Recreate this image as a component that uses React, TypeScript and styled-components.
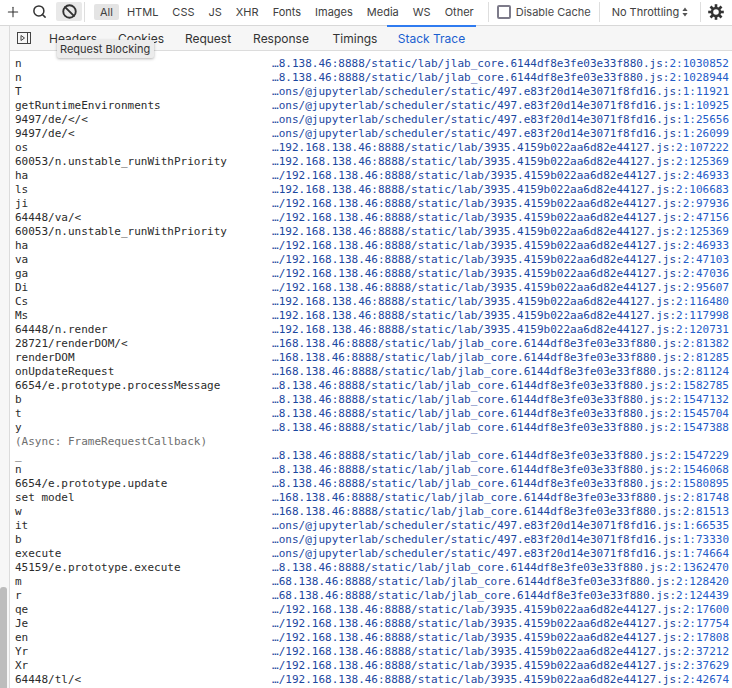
import * as React from 'react'
import styled, { createGlobalStyle } from 'styled-components'
import { Plus, Search, Ban } from 'lucide-react'

const GlobalStyle = createGlobalStyle`
  html, body {
    margin: 0;
    padding: 0;
    background: #fff;
    overflow: hidden;
  }
`

const Page = styled.div`
  position: relative;
  width: 732px;
  height: 688px;
  overflow: hidden;
  font-family: Inter, 'Liberation Sans', sans-serif;
  color: #333;
  background: #fff;
`

const Toolbar = styled.div`
  display: flex;
  align-items: center;
  height: 23px;
  padding-bottom: 2px;
  border-bottom: 1px solid #d8d8d8;
  font-size: 11px;
  background: #fff;
`

const ToolIcon = styled.div<{ $active?: boolean }>`
  display: flex;
  align-items: center;
  justify-content: center;
  width: 26px;
  height: 19px;
  margin-left: ${p => (p.$active ? '4px' : '0')};
  border-radius: 2px;
  background: ${p => (p.$active ? '#e9e9e9' : 'transparent')};
  color: #333;
`

const Divider = styled.div<{ $left: number; $right: number }>`
  flex: none;
  width: 1px;
  height: 20px;
  margin: 0 ${p => p.$right}px 0 ${p => p.$left}px;
  background: #dedede;
`

const Filter = styled.div<{ $active?: boolean }>`
  height: 16px;
  line-height: 16px;
  padding: 0 6px;
  margin-right: 2px;
  border-radius: 2px;
  background: ${p => (p.$active ? '#e4e4e4' : 'transparent')};
  color: #404040;
  white-space: nowrap;
`

const CheckBox = styled.div`
  flex: none;
  width: 10px;
  height: 10px;
  margin-right: 5px;
  border: 2px solid #7d7b8a;
  border-radius: 2px;
`

const Label = styled.div`
  white-space: nowrap;
  color: #4a4a4a;
`

const Throttle = styled.div`
  display: flex;
  align-items: center;
  gap: 3px;
  white-space: nowrap;
  color: #404040;
`

const Body = styled.div`
  display: flex;
  height: 662px;
`

const Gutter = styled.div`
  position: relative;
  width: 9px;
  flex: none;
  background: #f7f7f7;
  border-right: 1px solid #dcdcdc;
`

const ScrollThumb = styled.div`
  position: absolute;
  left: 0;
  top: 561px;
  bottom: 0;
  width: 7px;
  border-radius: 3px 3px 0 0;
  background: #bdbdbd;
`

const Main = styled.div`
  flex: 1;
  min-width: 0;
  display: flex;
  flex-direction: column;
`

const Tabs = styled.div`
  display: flex;
  align-items: center;
  height: 24px;
  flex: none;
  border-bottom: 1px solid #dcdcdc;
  background: #f6f6f6;
  font-size: 12px;
  color: #333;
`

const PanelToggle = styled.div`
  display: flex;
  margin: 0 10px 0 7px;
`

const Tab = styled.div<{ $active?: boolean; $width: number }>`
  position: relative;
  width: ${p => p.$width}px;
  height: 24px;
  line-height: 26px;
  text-align: center;
  white-space: nowrap;
  color: ${p => (p.$active ? '#1a5fd0' : '#333')};

  ${p =>
    p.$active &&
    `
    &::before {
      content: '';
      position: absolute;
      left: 0;
      right: 0;
      top: -1px;
      height: 2px;
      background: #2f7bf0;
    }
  `}
`

const Tooltip = styled.div`
  position: absolute;
  left: 57px;
  top: 40px;
  height: 18px;
  line-height: 18px;
  padding: 0 4px 0 3px;
  border-radius: 2px;
  background: #ececec;
  box-shadow: 0 1px 3px rgba(0, 0, 0, 0.3);
  font-size: 11px;
  color: #333;
  white-space: nowrap;
`

const Trace = styled.div`
  flex: 1;
  min-height: 0;
  padding: 6px 3px 0 5px;
  font-family: 'DejaVu Sans Mono', 'Liberation Mono', monospace;
  font-size: 11px;
  line-height: 14px;
  overflow: hidden;
`

const Row = styled.div`
  display: flex;
  justify-content: space-between;
  height: 14px;
  white-space: pre;
`

const Fn = styled.span`
  color: #2b2b2b;
`

const Async = styled.div`
  height: 14px;
  color: #6e6e6e;
`

const Url = styled.span`
  color: #1b479f;
`

const Pos = styled.span`
  color: #1f5cc8;
`

const core = '/static/lab/jlab_core.6144df8e3fe03e33f880.js'
const sched = 'ons/@jupyterlab/scheduler/static/497.e83f20d14e3071f8fd16.js'
const lab = '192.168.138.46:8888/static/lab/3935.4159b022aa6d82e44127.js'

const rows: [string, string, string][] = [
  ['n', '8.138.46:8888' + core, '2:1030852'],
  ['n', '8.138.46:8888' + core, '2:1028944'],
  ['T', sched, '1:11921'],
  ['getRuntimeEnvironments', sched, '1:10925'],
  ['9497/de/</<', sched, '1:25656'],
  ['9497/de/<', sched, '1:26099'],
  ['os', lab, '2:107222'],
  ['60053/n.unstable_runWithPriority', lab, '2:125369'],
  ['ha', '/' + lab, '2:46933'],
  ['ls', lab, '2:106683'],
  ['ji', '/' + lab, '2:97936'],
  ['64448/va/<', '/' + lab, '2:47156'],
  ['60053/n.unstable_runWithPriority', lab, '2:125369'],
  ['ha', '/' + lab, '2:46933'],
  ['va', '/' + lab, '2:47103'],
  ['ga', '/' + lab, '2:47036'],
  ['Di', '/' + lab, '2:95607'],
  ['Cs', lab, '2:116480'],
  ['Ms', lab, '2:117998'],
  ['64448/n.render', lab, '2:120731'],
  ['28721/renderDOM/<', '168.138.46:8888' + core, '2:81382'],
  ['renderDOM', '168.138.46:8888' + core, '2:81285'],
  ['onUpdateRequest', '168.138.46:8888' + core, '2:81124'],
  ['6654/e.prototype.processMessage', '8.138.46:8888' + core, '2:1582785'],
  ['b', '8.138.46:8888' + core, '2:1547132'],
  ['t', '8.138.46:8888' + core, '2:1545704'],
  ['y', '8.138.46:8888' + core, '2:1547388'],
  ['(Async: FrameRequestCallback)', '', ''],
  ['_', '8.138.46:8888' + core, '2:1547229'],
  ['n', '8.138.46:8888' + core, '2:1546068'],
  ['6654/e.prototype.update', '8.138.46:8888' + core, '2:1580895'],
  ['set model', '168.138.46:8888' + core, '2:81748'],
  ['w', '168.138.46:8888' + core, '2:81513'],
  ['it', sched, '1:66535'],
  ['b', sched, '1:73330'],
  ['execute', sched, '1:74664'],
  ['45159/e.prototype.execute', '8.138.46:8888' + core, '2:1362470'],
  ['m', '68.138.46:8888' + core, '2:128420'],
  ['r', '68.138.46:8888' + core, '2:124439'],
  ['qe', '/' + lab, '2:17600'],
  ['Je', '/' + lab, '2:17754'],
  ['en', '/' + lab, '2:17808'],
  ['Yr', '/' + lab, '2:37212'],
  ['Xr', '/' + lab, '2:37629'],
  ['64448/tl/<', '/' + lab, '2:42674'],
]

const filters = ['All', 'HTML', 'CSS', 'JS', 'XHR', 'Fonts', 'Images', 'Media', 'WS', 'Other']
const tabs: [string, number][] = [
  ['Headers', 64],
  ['Cookies', 72],
  ['Request', 62],
  ['Response', 84],
  ['Timings', 64],
  ['Stack Trace', 89],
]

function Gear() {
  const teeth = [0, 45, 90, 135, 180, 225, 270, 315]
  return (
    <svg width="16" height="16" viewBox="0 0 16 16">
      {teeth.map(a => (
        <rect key={a} x="6.7" y="0.2" width="2.6" height="3.6" fill="#333" transform={`rotate(${a} 8 8)`} />
      ))}
      <circle cx="8" cy="8" r="4" fill="none" stroke="#333" strokeWidth="2.4" />
    </svg>
  )
}

function PanelIcon() {
  return (
    <svg width="14" height="12" viewBox="0 0 14 12">
      <rect x="0.5" y="0.5" width="13" height="11" fill="none" stroke="#444" />
      <line x1="10.5" y1="0.5" x2="10.5" y2="11.5" stroke="#444" />
      <path d="M4 3.5 L7.5 6 L4 8.5 Z" fill="none" stroke="#444" />
    </svg>
  )
}

function Updown() {
  return (
    <svg width="6" height="10" viewBox="0 0 6 10">
      <path d="M3 0.5 L5.6 4 H0.4 Z M3 9.5 L5.6 6 H0.4 Z" fill="#555" />
    </svg>
  )
}

export default function App() {
  return (
    <Page>
      <GlobalStyle />
      <Toolbar>
        <ToolIcon>
          <Plus size={16} strokeWidth={1.6} />
        </ToolIcon>
        <ToolIcon>
          <Search size={15} strokeWidth={2.4} />
        </ToolIcon>
        <ToolIcon $active>
          <Ban size={15} strokeWidth={3} />
        </ToolIcon>
        <Divider $left={2} $right={9} />
        {filters.map((f, i) => (
          <Filter key={f} $active={i === 0}>
            {f}
          </Filter>
        ))}
        <Divider $left={6} $right={8} />
        <CheckBox />
        <Label>Disable Cache</Label>
        <Divider $left={8} $right={12} />
        <Throttle>
          No Throttling <Updown />
        </Throttle>
        <Divider $left={12} $right={7} />
        <Gear />
      </Toolbar>
      <Body>
        <Gutter>
          <ScrollThumb />
        </Gutter>
        <Main>
          <Tabs>
            <PanelToggle>
              <PanelIcon />
            </PanelToggle>
            {tabs.map(([name, width]) => (
              <Tab key={name} $width={width} $active={name === 'Stack Trace'}>
                {name}
              </Tab>
            ))}
          </Tabs>
          <Trace>
            {rows.map(([fn, url, pos], i) =>
              url ? (
                <Row key={i}>
                  <Fn>{fn}</Fn>
                  <span>
                    <Url>
                      {'…'}
                      {url}:
                    </Url>
                    <Pos>{pos}</Pos>
                  </span>
                </Row>
              ) : (
                <Async key={i}>{fn}</Async>
              ),
            )}
          </Trace>
        </Main>
      </Body>
      <Tooltip>Request Blocking</Tooltip>
    </Page>
  )
}
